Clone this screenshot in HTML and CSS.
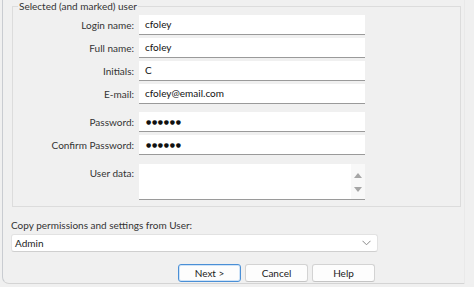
FILE: index.html
```html
<!DOCTYPE html>
<html>
<head>
<meta charset="utf-8">
<link rel="stylesheet" href="styles.css">
</head>
<body>
<div class="window">
  <fieldset class="group">
    <legend class="legend">Selected (and marked) user</legend>
    <div class="form">
      <label class="lbl">Login name:</label>
      <div class="field">cfoley</div>
      <label class="lbl">Full name:</label>
      <div class="field">cfoley</div>
      <label class="lbl">Initials:</label>
      <div class="field">C</div>
      <label class="lbl">E-mail:</label>
      <div class="field">cfoley@email.com</div>
      <label class="lbl sp">Password:</label>
      <div class="field sp pw">●●●●●●</div>
      <label class="lbl">Confirm Password:</label>
      <div class="field pw">●●●●●●</div>
      <label class="lbl sp2 top">User data:</label>
      <div class="field sp2 area">
        <div class="scroll">
          <svg width="8" height="6" viewBox="0 0 8 6"><path d="M0 6 L4 1 L8 6 Z" fill="#a6a6a6"/></svg>
          <svg width="8" height="6" viewBox="0 0 8 6"><path d="M0 0 L4 5 L8 0 Z" fill="#a6a6a6"/></svg>
        </div>
      </div>
    </div>
  </fieldset>
  <div class="copy">Copy permissions and settings from User:</div>
  <div class="select">
    <span>Admin</span>
    <svg width="9" height="6" viewBox="0 0 9 6"><path d="M0.5 0.8 L4.5 4.8 L8.5 0.8" fill="none" stroke="#8a8a8a" stroke-width="1"/></svg>
  </div>
  <div class="buttons">
    <button class="btn def">Next &gt;</button>
    <button class="btn">Cancel</button>
    <button class="btn">Help</button>
  </div>
</div>
</body>
</html>
```
FILE: styles.css
```css
html, body {
  margin: 0;
  padding: 0;
}
body {
  width: 474px;
  height: 287px;
  overflow: hidden;
  background: #f0f0f0;
  font-family: "Lato", "Open Sans", sans-serif;
  font-size: 10px;
  color: #2b2b2b;
}
.window {
  margin-left: 2px;
  width: 463px;
  height: 284px;
  box-sizing: border-box;
  background: #f0f0f0;
  border-left: 1px solid #c9ccd1;
  border-right: 1px solid #e9e9e9;
  border-bottom: 1px solid #d4d4d4;
  border-bottom-left-radius: 7px;
  overflow: hidden;
}
.group {
  margin: 0 0 0 9px;
  padding: 2px 0 6px 0;
  width: 449px;
  box-sizing: border-box;
  border: 1px solid #dcdcdc;
  min-width: 0;
}
.legend {
  padding: 0 1px;
  margin-left: 5px;
  line-height: 13px;
  color: #333;
}
.form {
  display: grid;
  grid-template-columns: 121px 226px;
  column-gap: 5px;
  row-gap: 3px;
}
.lbl {
  text-align: right;
  line-height: 20px;
  color: #333;
}
.lbl.top { line-height: 18px; }
.field {
  height: 20px;
  box-sizing: border-box;
  background: #fff;
  border-bottom: 1px solid #9a9a9a;
  padding-left: 6px;
  line-height: 19px;
  color: #111;
}
.sp { margin-top: 5px; }
.sp2 { margin-top: 6px; }
.pw {
  font-family: "DejaVu Sans", sans-serif;
  font-size: 6px;
  letter-spacing: 0.7px;
  padding-left: 7px;
}
.area {
  height: 36px;
  display: flex;
  justify-content: flex-end;
}
.scroll {
  width: 14px;
  height: 35px;
  background: #f8f8f8;
  display: flex;
  flex-direction: column;
  align-items: center;
  justify-content: space-between;
  padding: 8px 0 6px;
  box-sizing: border-box;
}
.scroll svg { display: block; }
.copy {
  margin: 11px 0 0 8px;
  line-height: 15px;
  color: #333;
}
.select {
  margin: 1px 0 0 8px;
  width: 367px;
  height: 18px;
  box-sizing: border-box;
  background: #fff;
  border: 1px solid #e2e2e2;
  border-bottom-color: #cfcfcf;
  border-radius: 3px;
  display: flex;
  align-items: center;
  justify-content: space-between;
  padding: 0 6px 0 3px;
  color: #222;
}
.select svg { display: block; }
.buttons {
  margin: 12px 0 0 175px;
  display: flex;
  gap: 4px;
}
.btn {
  width: 63px;
  height: 18px;
  box-sizing: border-box;
  background: #fdfdfd;
  border: 1px solid #d3d3d3;
  border-bottom-color: #c4c4c4;
  border-radius: 3px;
  font-family: inherit;
  font-size: 10px;
  color: #222;
  padding: 0;
  line-height: 15px;
}
.btn.def {
  border: 1px solid #4a8fd6;
  box-shadow: inset 0 0 0 1px #cfe3f7;
}
```
